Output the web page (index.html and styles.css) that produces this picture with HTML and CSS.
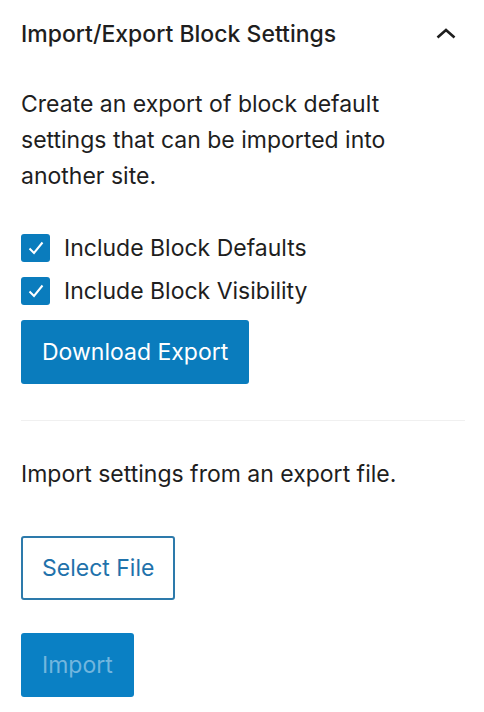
FILE: index.html
```html
<!DOCTYPE html>
<html lang="en">
<head>
<meta charset="utf-8">
<title>Import/Export Block Settings</title>
<link rel="stylesheet" href="styles.css">
</head>
<body>
<div class="panel">
  <div class="panel-header">
    <span class="panel-title">Import/Export Block Settings</span>
    <svg class="chevron" width="20" height="11" viewBox="0 0 20 11" aria-hidden="true">
      <path d="M1.5 9.5 L10 2 L18.5 9.5" fill="none" stroke="#1e1e1e" stroke-width="2.6"/>
    </svg>
  </div>
  <p class="desc">Create an export of block default settings that can be imported into another site.</p>
  <div class="checks">
    <label class="check">
      <span class="box">
        <svg width="20" height="20" viewBox="0 0 20 20" aria-hidden="true">
          <path d="M3.5 10.5 L8 15 L16.5 4.5" fill="none" stroke="#fff" stroke-width="2"/>
        </svg>
      </span>
      <span class="check-label">Include Block Defaults</span>
    </label>
    <label class="check">
      <span class="box">
        <svg width="20" height="20" viewBox="0 0 20 20" aria-hidden="true">
          <path d="M3.5 10.5 L8 15 L16.5 4.5" fill="none" stroke="#fff" stroke-width="2"/>
        </svg>
      </span>
      <span class="check-label">Include Block Visibility</span>
    </label>
    <button class="btn btn-primary">Download Export</button>
  </div>
  <hr class="sep">
  <p class="desc desc-import">Import settings from an export file.</p>
  <div class="import-actions">
    <button class="btn btn-secondary">Select File</button>
    <button class="btn btn-primary btn-disabled">Import</button>
  </div>
</div>
</body>
</html>
```
FILE: styles.css
```css
* { box-sizing: border-box; }
html, body { margin: 0; padding: 0; background: #fff; }
body {
  font-family: Inter, "Open Sans", "Liberation Sans", sans-serif;
  color: #1e1e1e;
}
.panel {
  padding: 20px 19px 0 21px;
}
.panel-header {
  display: flex;
  align-items: center;
  justify-content: space-between;
  height: 28px;
}
.panel-title {
  font-size: 23px;
  font-weight: 500;
  line-height: 28px;
}
.chevron {
  margin-right: 9px;
  margin-top: -2px;
}
.desc {
  margin: 38px 0 0;
  font-size: 23px;
  line-height: 36px;
}
.checks {
  margin-top: 40px;
  display: flex;
  flex-direction: column;
  align-items: flex-start;
  gap: 15px;
}
.check {
  display: flex;
  align-items: center;
  gap: 14px;
  height: 28px;
  font-size: 23px;
}
.box {
  width: 29px;
  height: 28px;
  border-radius: 3px;
  background: #0a7cbd;
  display: flex;
  align-items: center;
  justify-content: center;
}
.btn {
  font-family: inherit;
  font-size: 23px;
  height: 64px;
  padding: 0 21px;
  border-radius: 3px;
  border: none;
  cursor: pointer;
}
.btn-primary {
  background: #0a7cbd;
  color: #fff;
}
.btn-disabled {
  background: #0a80c4;
  color: #72b6de;
}
.btn-secondary {
  background: #fff;
  color: #1f72ab;
  border: 2px solid #2d7aab;
  padding: 0 19px;
}
.sep {
  margin: 36px 0 0;
  border: none;
  border-top: 1px solid #f0f0f0;
}
.desc-import {
  margin-top: 35px;
}
.import-actions {
  margin-top: 44px;
  display: flex;
  flex-direction: column;
  align-items: flex-start;
  gap: 33px;
}
```
